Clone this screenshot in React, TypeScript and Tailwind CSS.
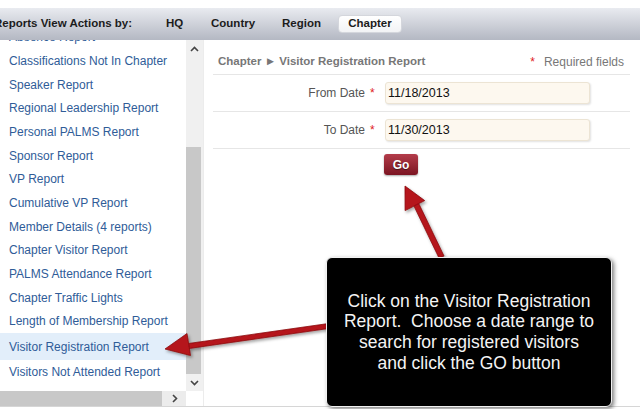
import React from "react";

// ---------------------------------------------------------------------------
// Sidebar data
// ---------------------------------------------------------------------------

const REPORTS = [
	"Absence Report",
	"Classifications Not In Chapter",
	"Speaker Report",
	"Regional Leadership Report",
	"Personal PALMS Report",
	"Sponsor Report",
	"VP Report",
	"Cumulative VP Report",
	"Member Details (4 reports)",
	"Chapter Visitor Report",
	"PALMS Attendance Report",
	"Chapter Traffic Lights",
	"Length of Membership Report",
	"Visitor Registration Report",
	"Visitors Not Attended Report",
];

const ACTIVE = "Visitor Registration Report";

function Chevron({ dir }: { dir: "up" | "down" | "right" }) {
	const points =
		dir === "up" ? "1,6 4.5,2.5 8,6" : dir === "down" ? "1,3 4.5,6.5 8,3" : "3,1 6.5,4.5 3,8";
	return (
		<svg width="9" height="9" viewBox="0 0 9 9">
			<polyline points={points} fill="none" stroke="#444" strokeWidth="1.6" />
		</svg>
	);
}

function Sidebar() {
	return (
		<div className="flex flex-col w-[203px]">
			<div className="flex h-[351px]">
				<div className="w-[186px] overflow-hidden">
					<ul className="mt-[-14.5px]">
						{REPORTS.map((name) => (
							<li
								key={name}
								className={`flex items-center pl-[9px] text-[12px] text-[#2f5c98] whitespace-nowrap ${
									name === ACTIVE ? "h-[27px] bg-[#e2eefa]" : "h-[23.67px]"
								}`}
							>
								{name}
							</li>
						))}
					</ul>
				</div>
				<div className="w-[17px] bg-[#f0f0f0] flex flex-col">
					<div className="h-[18px] flex items-center justify-center">
						<Chevron dir="up" />
					</div>
					<div className="h-[316px]">
						<div className="h-[89px]" />
						<div className="h-[227px] w-[15px] bg-[#c8c8c8]" />
					</div>
					<div className="h-[17px] flex items-center justify-center">
						<Chevron dir="down" />
					</div>
				</div>
			</div>
			<div className="flex h-[15px]">
				<div className="w-[186px] flex bg-[#ececec]">
					<div className="w-[162px] bg-[#c8c8c8]" />
					<div className="flex-1 flex items-center justify-center">
						<Chevron dir="right" />
					</div>
				</div>
				<div className="w-[17px] bg-white" />
			</div>
		</div>
	);
}

// ---------------------------------------------------------------------------
// Report form
// ---------------------------------------------------------------------------

function DateRow({ label, value }: { label: string; value: string }) {
	return (
		<div className="flex items-center h-[37px] border-b border-[#e6e6e6]">
			<span className="w-[152px] text-right text-[12px] text-[#555]">{label}</span>
			<span className="w-[20px] pl-[5px] text-[12px] text-[#e0201c]">*</span>
			<div className="w-[205px] h-[22px] flex items-center pl-[2px] rounded-[3px] border border-[#ece4d4] bg-[#fdf8ef] shadow-[1px_1px_2px_rgba(0,0,0,0.12)] text-[12.5px] text-[#111]">
				{value}
			</div>
		</div>
	);
}

function ReportForm() {
	return (
		<div className="flex-1 border-l border-[#ececec] pl-[9px] pr-[10px]">
			<div className="h-[35px] flex items-center pt-[10px] pl-[5px] border-b border-[#e6e6e6]">
				<span className="text-[11.5px] font-bold text-[#777]">
					Chapter ► Visitor Registration Report
				</span>
				<span className="ml-auto mr-[5px] text-[12px] text-[#e0201c]">*</span>
				<span className="ml-[4px] pr-[6px] text-[12px] text-[#777]">Required fields</span>
			</div>
			<DateRow label="From Date" value="11/18/2013" />
			<DateRow label="To Date" value="11/30/2013" />
			<button
				type="button"
				className="mt-[5px] ml-[171px] w-[34px] h-[21px] rounded-[3px] bg-linear-to-b from-[#b33c4a] to-[#7c1422] text-white text-[12px] font-bold [text-shadow:0_1px_1px_rgba(0,0,0,0.5)] shadow-[0_1px_2px_rgba(0,0,0,0.35)]"
			>
				Go
			</button>
		</div>
	);
}

// ---------------------------------------------------------------------------
// Annotation arrows
// ---------------------------------------------------------------------------

function Arrows() {
	return (
		<svg
			className="absolute left-0 top-0 pointer-events-none"
			width="640"
			height="409"
			viewBox="0 0 640 409"
		>
			<defs>
				<filter id="sh" x="-20%" y="-20%" width="140%" height="140%">
					<feDropShadow dx="1.5" dy="2" stdDeviation="1.5" floodColor="#000" floodOpacity="0.35" />
				</filter>
			</defs>
			<g filter="url(#sh)" fill="#b5141a" stroke="#8c0c10" strokeWidth="0.8">
				<polygon points="332,323 332,328 189,348.5 188.5,343.5" />
				<polygon points="165,349 187,333.5 190.5,355.5" />
				<polygon points="413.5,205 418.5,203 444,256 439,258" />
				<polygon points="405,186 424.7,200.6 405.1,210.6" />
			</g>
		</svg>
	);
}

export default function App() {
	return (
		<div className="relative w-[640px] h-[409px] overflow-hidden bg-white font-['Liberation_Sans',Arial,sans-serif]">
			<div className="h-[8px]" />
			<header className="relative z-10 h-[32px] flex items-center bg-linear-to-b from-[#e9ebf0] to-[#b4b8c3] text-[11.5px] font-bold text-[#1c1c1c] whitespace-nowrap">
				<span className="ml-[-6px] w-[172px]">Reports View Actions by:</span>
				<span className="w-[45px]">HQ</span>
				<span className="w-[71px]">Country</span>
				<span className="w-[56px]">Region</span>
				<span className="w-[64px] h-[18px] flex items-center justify-center rounded-[4px] border border-[#d4d6dc] bg-linear-to-b from-white to-[#f2f3f5]">
					Chapter
				</span>
			</header>
			<div className="flex h-[366px]">
				<Sidebar />
				<ReportForm />
			</div>
			<div className="h-px bg-[#d6d6d6]" />
			<Arrows />
			<div className="absolute left-[326px] top-[257px] w-[286px] h-[150px] rounded-[6px] border-[1.5px] border-[#f2f2f2] bg-black shadow-[2px_2px_4px_rgba(0,0,0,0.5)] flex flex-col items-center justify-center text-[17.5px] leading-[20.7px] text-[#f4f4f4] whitespace-pre">
				<span>Click on the Visitor Registration</span>
				<span>Report.  Choose a date range to</span>
				<span>search for registered visitors</span>
				<span>and click the GO button</span>
			</div>
		</div>
	);
}
